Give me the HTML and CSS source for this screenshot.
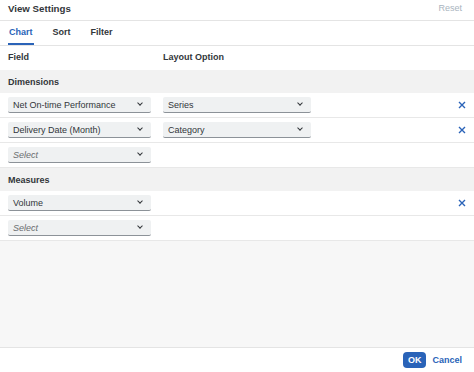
FILE: index.html
```html
<!DOCTYPE html>
<html>
<head>
    <title>View Settings</title>
    <meta charset="utf-8">
    <link rel="stylesheet" href="styles.css">
</head>
<body>
    <div class="dialog">
        <div class="dialog-header">
            <h1>View Settings</h1>
            <span class="reset">Reset</span>
        </div>

        <div class="tabs">
            <span class="tab active">Chart</span>
            <span class="tab">Sort</span>
            <span class="tab">Filter</span>
        </div>

        <div class="content">
            <div class="row col-head">
                <span class="col-field">Field</span>
                <span class="col-layout">Layout Option</span>
            </div>

            <!-- Dimensions -->
            <div class="group">Dimensions</div>
            <div class="row">
                <div class="select col-field"><span>Net On-time Performance</span><i class="arrow"></i></div>
                <div class="select wide col-layout"><span>Series</span><i class="arrow"></i></div>
                <svg class="remove" width="8" height="8" viewBox="0 0 8 8"><path d="M1 1L7 7M7 1L1 7"/></svg>
            </div>
            <div class="row">
                <div class="select col-field"><span>Delivery Date (Month)</span><i class="arrow"></i></div>
                <div class="select wide col-layout"><span>Category</span><i class="arrow"></i></div>
                <svg class="remove" width="8" height="8" viewBox="0 0 8 8"><path d="M1 1L7 7M7 1L1 7"/></svg>
            </div>
            <div class="row">
                <div class="select col-field placeholder"><span>Select</span><i class="arrow"></i></div>
            </div>

            <!-- Measures -->
            <div class="group">Measures</div>
            <div class="row">
                <div class="select col-field"><span>Volume</span><i class="arrow"></i></div>
                <svg class="remove" width="8" height="8" viewBox="0 0 8 8"><path d="M1 1L7 7M7 1L1 7"/></svg>
            </div>
            <div class="row">
                <div class="select col-field placeholder"><span>Select</span><i class="arrow"></i></div>
            </div>

            <div class="empty"></div>
        </div>

        <div class="dialog-footer">
            <button class="btn-ok">OK</button>
            <button class="btn-cancel">Cancel</button>
        </div>
    </div>
</body>
</html>
```

FILE: styles.css
```css
* {
    box-sizing: border-box;
}

body {
    margin: 0;
    font-family: "Liberation Sans", Arial, sans-serif;
    font-size: 9px;
    color: #32363a;
    background: #ffffff;
}

.dialog {
    display: flex;
    flex-direction: column;
    width: 474px;
    height: 372px;
}

.dialog-header {
    display: flex;
    align-items: center;
    justify-content: space-between;
    height: 21px;
    padding: 0 12px 4px 8px;
    border-bottom: 1px solid #e4e4e4;
}

h1 {
    margin: 0;
    font-size: 9.7px;
    font-weight: bold;
    color: #32363a;
}

.reset {
    color: #a9b4be;
    font-size: 9px;
}

/* Tab bar */
.tabs {
    display: flex;
    gap: 18px;
    height: 25px;
    padding: 0 8px;
    border-bottom: 1px solid #e4e4e4;
}

.tab {
    display: flex;
    align-items: center;
    padding: 0 1px;
    font-weight: bold;
    color: #32363a;
    border-bottom: 2px solid transparent;
}

.tab.active {
    color: #2a63b8;
    border-bottom-color: #2a63b8;
}

.content {
    flex: 1;
    display: flex;
    flex-direction: column;
}

.row {
    display: flex;
    align-items: center;
    height: 25px;
    padding: 0 8px;
    border-bottom: 1px solid #e8e8e8;
}

.col-head {
    height: 24px;
    padding-bottom: 2px;
    font-weight: bold;
    border-bottom: none;
}

.col-field {
    width: 143px;
    flex: none;
}

.col-layout {
    margin-left: 12px;
}

.group {
    display: flex;
    align-items: center;
    height: 23px;
    padding: 0 8px;
    background: #f2f2f2;
    font-weight: bold;
}

.select {
    display: flex;
    align-items: center;
    justify-content: space-between;
    height: 16px;
    padding: 0 6px 0 5px;
    background: #eff1f2;
    border-bottom: 1px solid #8c9298;
    border-radius: 2px;
}

.select.wide {
    width: 148px;
}

.placeholder span {
    font-style: italic;
    color: #6a6d70;
}

.arrow {
    width: 4px;
    height: 4px;
    border-right: 1.2px solid #32363a;
    border-bottom: 1.2px solid #32363a;
    transform: rotate(45deg);
    margin: -3px 3px 0 0;
}

.remove {
    margin-left: auto;
    fill: none;
    stroke: #2a63b8;
    stroke-width: 1.4;
}

.empty {
    flex: 1;
    background: #f7f7f7;
}

.dialog-footer {
    display: flex;
    align-items: center;
    justify-content: flex-end;
    gap: 1px;
    height: 25px;
    padding: 0 7px;
    border-top: 1px solid #e4e4e4;
}

.dialog-footer button {
    font-family: inherit;
    font-size: 9px;
    font-weight: bold;
    border: none;
    border-radius: 4px;
    height: 16px;
    padding: 0 5px;
}

.btn-ok {
    background: #2a63b8;
    color: #ffffff;
}

.btn-cancel {
    background: none;
    color: #2a63b8;
}
```
